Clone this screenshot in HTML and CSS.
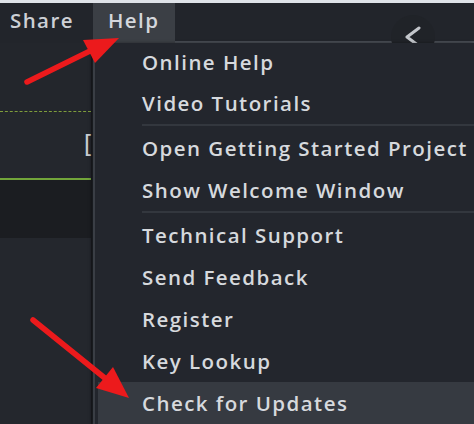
FILE: index.html
```html
<!DOCTYPE html>
<html>
<head>
<meta charset="utf-8">
<link rel="stylesheet" href="styles.css">
</head>
<body>
<div class="screen">
  <div class="topstrip"></div>
  <div class="menubar">
    <div class="menu-item">Share</div>
    <div class="menu-item menu-item--active">Help</div>
    <div class="bar-rest">
      <div class="collapse">
        <svg width="20" height="22" viewBox="0 0 20 22"><path d="M16 2 L4 11 L16 20" fill="none" stroke="#c3c6cb" stroke-width="3" stroke-linecap="round" stroke-linejoin="round"/></svg>
      </div>
    </div>
  </div>
  <div class="workspace">
    <div class="left-panel">
      <div class="lp-top"></div>
      <div class="lp-mid"><span class="bracket">[</span></div>
      <div class="lp-dark"></div>
      <div class="lp-bottom"></div>
    </div>
  </div>

  <div class="dropdown">
    <div class="dd-row">Online Help</div>
    <div class="dd-row">Video Tutorials</div>
    <div class="dd-sep"></div>
    <div class="dd-row">Open Getting Started Project</div>
    <div class="dd-row">Show Welcome Window</div>
    <div class="dd-sep"></div>
    <div class="dd-row">Technical Support</div>
    <div class="dd-row">Send Feedback</div>
    <div class="dd-row">Register</div>
    <div class="dd-row">Key Lookup</div>
    <div class="dd-row dd-row--hover">Check for Updates</div>
  </div>

  <svg class="arrows" width="474" height="424" viewBox="0 0 474 424">
    <line x1="27" y1="82" x2="92" y2="50" stroke="#ec1a1c" stroke-width="5.5" stroke-linecap="round"/>
    <polygon points="119,38 83,40 95,63" fill="#ec1a1c"/>
    <line x1="33" y1="320" x2="106" y2="379" stroke="#ec1a1c" stroke-width="5.5" stroke-linecap="round"/>
    <polygon points="129,398 96,388 113,367" fill="#ec1a1c"/>
  </svg>
</div>
</body>
</html>
```

FILE: styles.css
```css
* { box-sizing: border-box; }
html, body { margin: 0; padding: 0; }
body {
  width: 474px;
  height: 424px;
  overflow: hidden;
  background: #23262c;
  font-family: "Open Sans", "Liberation Sans", sans-serif;
}
.screen {
  position: relative;
  width: 474px;
  height: 424px;
  overflow: hidden;
  display: flex;
  flex-direction: column;
}
.topstrip {
  height: 3px;
  background: #dfe3e8;
  flex: none;
}
.menubar {
  height: 40px;
  flex: none;
  display: flex;
  background: #22252b;
}
.menu-item {
  font-size: 20.5px;
  font-weight: 600;
  letter-spacing: 1.4px;
  color: #cdd0d5;
  padding: 0 0 0 10px;
  width: 93px;
  line-height: 34px;
}
.menu-item--active {
  width: 82px;
  padding-left: 15px;
  background: #3b3f45;
  color: #d4d7dc;
}
.bar-rest {
  flex: 1;
  border-bottom: 2px solid #474b52;
  display: flex;
  justify-content: flex-end;
  align-items: flex-end;
}
.collapse {
  width: 44px;
  height: 44px;
  margin: 0 39px -22px 0;
  border-radius: 50%;
  background: #202328;
  display: flex;
  align-items: center;
  justify-content: center;
  position: relative;
  top: -4px;
}
.collapse svg { margin-left: -1px; }

.workspace {
  flex: 1;
  display: flex;
}
.left-panel {
  width: 92px;
  display: flex;
  flex-direction: column;
  border-right: 1px solid #1a1c20;
}
.lp-top {
  height: 69px;
  border-bottom: 1px dashed #7f9d3c;
  background: #23262c;
}
.lp-mid {
  height: 68px;
  border-bottom: 2px solid #72a53a;
  background: #24272d;
  display: flex;
  justify-content: flex-end;
  align-items: center;
}
.bracket {
  font-family: "DejaVu Sans", sans-serif;
  font-size: 24px;
  color: #c9ccd0;
  margin-right: -2px;
}
.lp-dark {
  height: 58px;
  background: #1b1d21;
}
.lp-bottom {
  flex: 1;
  background: #24272d;
}

.dropdown {
  position: absolute;
  left: 93px;
  top: 43px;
  right: 0;
  bottom: 0;
  background: #23262d;
  border-left: 2px solid #3a3e45;
  box-shadow: -2px 0 3px rgba(0,0,0,0.35);
}
.dd-row {
  height: 42px;
  line-height: 42px;
  padding-left: 47px;
  font-size: 20.5px;
  font-weight: 600;
  letter-spacing: 1.45px;
  color: #d6d9dd;
  white-space: nowrap;
}
.dd-row:first-child {
  height: 39px;
  line-height: 38px;
}
.dd-sep {
  height: 3px;
  margin-left: 47px;
  border-top: 2px solid #33373e;
}
.dd-row--hover {
  background: #363a41;
  margin-left: 3px;
  padding-left: 44px;
}
.arrows {
  position: absolute;
  left: 0;
  top: 0;
  pointer-events: none;
}
```
